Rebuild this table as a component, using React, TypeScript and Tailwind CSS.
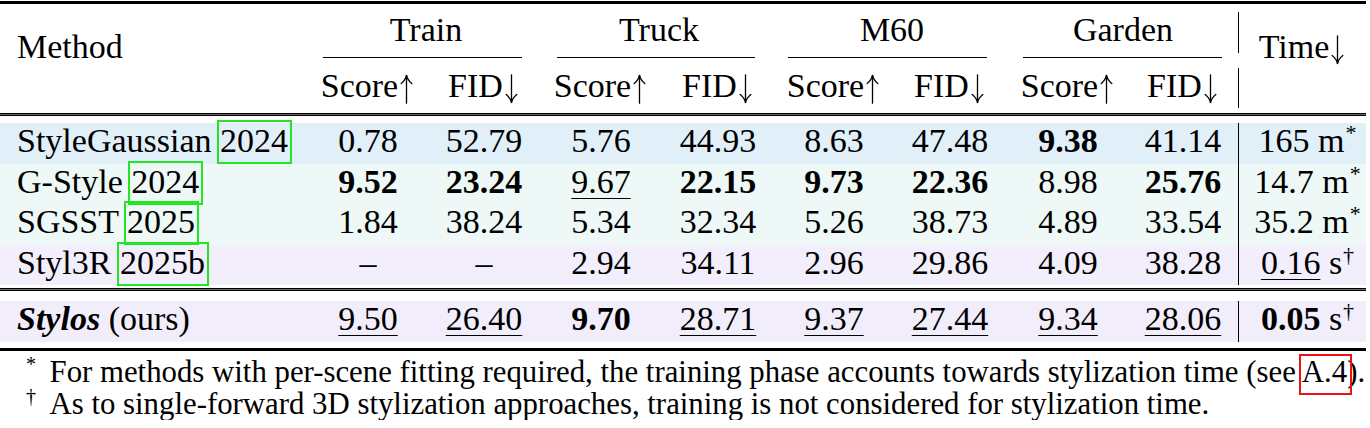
import React from "react";

const cols = "grid grid-cols-[310px_116px_116px_118px_116px_116px_116px_120px_110px_1px_127px]";

function Sup({ children }: { children: React.ReactNode }) {
  return <sup className="text-[22px] -top-[12px] ml-[1px]">{children}</sup>;
}

function U({ children }: { children: React.ReactNode }) {
  return <span className="underline decoration-1 underline-offset-[5px]">{children}</span>;
}

// math-style \uparrow / \downarrow
function Arrow({ down }: { down?: boolean }) {
  return (
    <svg
      viewBox="0 0 17 30"
      className={`inline-block w-[17px] h-[30px] align-[-7px] ${down ? "rotate-180" : ""}`}
      fill="none"
      stroke="currentColor"
      strokeWidth="1.3"
      strokeLinecap="round"
    >
      <path d="M8.5 29.2V1.5" />
      <path d="M3.2 9.5C6 7.3 7.8 4.8 8.5 1.2C9.2 4.8 11 7.3 13.8 9.5" />
    </svg>
  );
}

// hyperref style link box
function Cite({ children }: { children: React.ReactNode }) {
  return (
    <span className="relative">
      {children}
      <span className="absolute -left-[3px] -right-[4px] -top-[2px] -bottom-[5px] border-2 border-[#22e622]" />
    </span>
  );
}

function Val({ v }: { v: string }) {
  if (v.startsWith("**")) return <span className="font-bold">{v.slice(2, -2)}</span>;
  if (v.startsWith("_")) return <U>{v.slice(1, -1)}</U>;
  return <>{v}</>;
}

type RowData = {
  bg: string;
  method: React.ReactNode;
  cells: string[];
  time: React.ReactNode;
};

const rows: RowData[] = [
  {
    bg: "bg-[#e0eff8]",
    method: <>StyleGaussian <Cite>2024</Cite></>,
    cells: ["0.78", "52.79", "5.76", "44.93", "8.63", "47.48", "**9.38**", "41.14"],
    time: <>165 m<Sup>*</Sup></>,
  },
  {
    bg: "bg-[#eef8f6]",
    method: <>G-Style <Cite>2024</Cite></>,
    cells: ["**9.52**", "**23.24**", "_9.67_", "**22.15**", "**9.73**", "**22.36**", "8.98", "**25.76**"],
    time: <>14.7 m<Sup>*</Sup></>,
  },
  {
    bg: "bg-[#eef8f6]",
    method: <>SGSST <Cite>2025</Cite></>,
    cells: ["1.84", "38.24", "5.34", "32.34", "5.26", "38.73", "4.89", "33.54"],
    time: <>35.2 m<Sup>*</Sup></>,
  },
  {
    bg: "bg-[#f2eefb]",
    method: <>Styl3R <Cite>2025b</Cite></>,
    cells: ["–", "–", "2.94", "34.11", "2.96", "29.86", "4.09", "38.28"],
    time: <><U>0.16</U> s<Sup>†</Sup></>,
  },
];

const ours: RowData = {
  bg: "bg-[#f1edfb]",
  method: <><span className="font-bold italic">Stylos</span> (ours)</>,
  cells: ["_9.50_", "_26.40_", "**9.70**", "_28.71_", "_9.37_", "_27.44_", "_9.34_", "_28.06_"],
  time: <><span className="font-bold">0.05</span> s<Sup>†</Sup></>,
};

function Row({ r }: { r: RowData }) {
  return (
    <div className={`${cols} h-[40.5px] leading-[36.5px] ${r.bg}`}>
      <div className="pl-[17px] whitespace-nowrap">{r.method}</div>
      {r.cells.map((c, i) => (
        <div key={i} className="text-center whitespace-nowrap">
          <Val v={c} />
        </div>
      ))}
      <div className="bg-black" />
      <div className="pl-[10px] text-center whitespace-nowrap">{r.time}</div>
    </div>
  );
}

const groups = ["Train", "Truck", "M60", "Garden"];
const cmid = ["ml-[13px] mr-[20px]", "ml-[15px] mr-[21px]", "ml-[12px] mr-[21px]", "ml-[15px] mr-[16px]"];

function Header() {
  return (
    <div className={`${cols} grid-rows-[40.5px_15px_40.5px] mt-[8px] leading-[36.5px]`}>
      <div className="row-span-3 pl-[17px] pt-[17px]">Method</div>
      {groups.map((g) => (
        <div key={g} className="col-span-2 text-center">{g}</div>
      ))}
      <div className="bg-black" />
      <div className="row-span-3 text-center pt-[17px] whitespace-nowrap">
        Time<Arrow down />
      </div>
      {cmid.map((m, i) => (
        <div key={i} className="col-span-2 pt-[4px]">
          <div className={`h-px bg-black ${m}`} />
        </div>
      ))}
      <div />
      {groups.map((g) => (
        <React.Fragment key={g}>
          <div className="text-center whitespace-nowrap">Score<Arrow /></div>
          <div className="text-center whitespace-nowrap">FID<Arrow down /></div>
        </React.Fragment>
      ))}
      <div className="bg-black" />
    </div>
  );
}

export default function App() {
  return (
    <div className="w-[1366px] bg-white text-black [font-family:'Liberation_Serif','Times_New_Roman',serif] text-[34px]">
      <div className="mt-[1px] h-[3px] bg-black" />
      <Header />
      <div className="mt-[5px] h-[3px] border-y border-black bg-[#666]" />
      <div className="mt-[7px]">
        {rows.map((r, i) => (
          <Row key={i} r={r} />
        ))}
      </div>
      <div className="mt-[3px] h-[3px] border-y border-black bg-[#666]" />
      <div className="mt-[10px]">
        <Row r={ours} />
      </div>
      <div className="mt-[6.5px] h-[3px] bg-black" />
      <div className="pt-[5px] pl-[26px] text-[30.8px] leading-[32px] whitespace-nowrap">
        <p>
          <span className="inline-block w-[23.5px]">
            <sup className="text-[20px] -top-[11px]">*</sup>
          </span>
          For methods with per-scene fitting required, the training phase accounts towards stylization time (see{" "}
          <span className="relative">
            A.4
            <span className="absolute -left-[3px] -right-[5px] -top-[1px] -bottom-[6px] border-2 border-[#ee1111]" />
          </span>
          ).
        </p>
        <p>
          <span className="inline-block w-[23.5px]">
            <sup className="text-[20px] -top-[11px]">†</sup>
          </span>
          As to single-forward 3D stylization approaches, training is not considered for stylization time.
        </p>
      </div>
    </div>
  );
}
